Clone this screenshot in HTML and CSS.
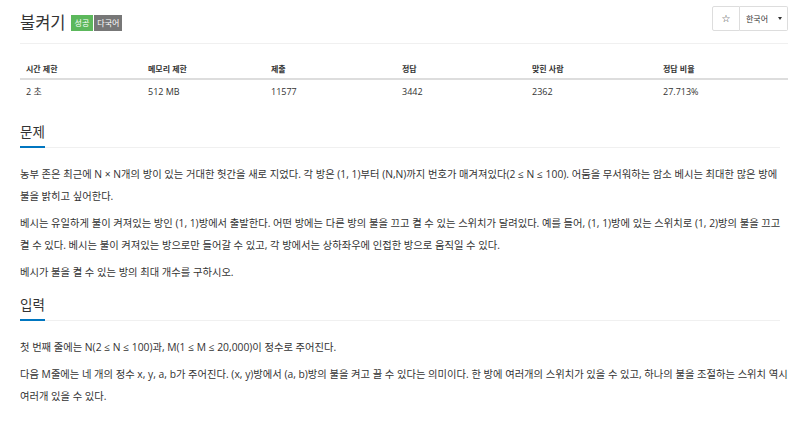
FILE: index.html
```html
<!DOCTYPE html>
<html lang="ko">
<head>
<meta charset="utf-8">
<link rel="stylesheet" href="styles.css">
</head>
<body>
<div class="page">
  <div class="page-header">
    <h1 class="title">불켜기<span class="badge badge-success">성공</span><span class="badge badge-gray">다국어</span></h1>
    <div class="btn-group">
      <button class="btn btn-star">☆</button>
      <button class="btn btn-lang">한국어<span class="caret"></span></button>
    </div>
  </div>

  <table class="info">
    <thead>
      <tr><th>시간 제한</th><th>메모리 제한</th><th>제출</th><th>정답</th><th>맞힌 사람</th><th>정답 비율</th></tr>
    </thead>
    <tbody>
      <tr><td>2 초</td><td>512 MB</td><td>11577</td><td>3442</td><td>2362</td><td>27.713%</td></tr>
    </tbody>
  </table>

  <section class="section">
    <div class="headline"><h2>문제</h2></div>
    <div class="text">
      <p>농부 존은 최근에 N × N개의 방이 있는 거대한 헛간을 새로 지었다. 각 방은 (1, 1)부터 (N,N)까지 번호가 매겨져있다(2 ≤ N ≤ 100). 어둠을 무서워하는 암소 베시는 최대한 많은 방에 불을 밝히고 싶어한다.</p>
      <p>베시는 유일하게 불이 켜져있는 방인 (1, 1)방에서 출발한다. 어떤 방에는 다른 방의 불을 끄고 켤 수 있는 스위치가 달려있다. 예를 들어, (1, 1)방에 있는 스위치로 (1, 2)방의 불을 끄고 켤 수 있다. 베시는 불이 켜져있는 방으로만 들어갈 수 있고, 각 방에서는 상하좌우에 인접한 방으로 움직일 수 있다.</p>
      <p>베시가 불을 켤 수 있는 방의 최대 개수를 구하시오.</p>
    </div>
  </section>

  <section class="section">
    <div class="headline"><h2>입력</h2></div>
    <div class="text">
      <p>첫 번째 줄에는 N(2 ≤ N ≤ 100)과, M(1 ≤ M ≤ 20,000)이 정수로 주어진다.</p>
      <p>다음 M줄에는 네 개의 정수 x, y, a, b가 주어진다. (x, y)방에서 (a, b)방의 불을 켜고 끌 수 있다는 의미이다. 한 방에 여러개의 스위치가 있을 수 있고, 하나의 불을 조절하는 스위치 역시 여러개 있을 수 있다.</p>
    </div>
  </section>
</div>
</body>
</html>
```

FILE: styles.css
```css
* { box-sizing: border-box; }
html, body { margin: 0; padding: 0; background: #fff; }
body {
  font-family: "Open Sans", "Noto Sans CJK KR", sans-serif;
  color: #333;
}
.page {
  display: flex;
  flex-direction: column;
  padding: 0 12px 0 20px;
}

.page-header {
  display: flex;
  justify-content: space-between;
  align-items: flex-start;
  border-bottom: 1px solid #f0f0f0;
  height: 44px;
}
.title {
  margin: 12px 0 0;
  font-size: 16.5px;
  font-weight: 400;
  line-height: 20px;
  display: flex;
  align-items: center;
  font-family: "Noto Sans CJK KR", sans-serif;
  color: #333;
}
.badge {
  display: inline-block;
  font-size: 8px;
  line-height: 16px;
  height: 16px;
  padding: 0 4px;
  color: #fff;
  font-weight: 400;
  margin-left: 1px;
  margin-top: 2px;
}
.badge-success { background: #5cb85c; margin-left: 5px; }
.badge-gray { background: #777; padding: 0 3px; }

.btn-group { display: flex; margin-top: 6px; }
.btn {
  font-family: "Noto Sans CJK KR", sans-serif;
  background: #fff;
  border: 1px solid #ddd;
  color: #333;
  height: 25px;
  font-size: 8px;
  margin: 0;
  display: flex;
  align-items: center;
}
.btn-star {
  width: 28px;
  padding: 0;
  justify-content: center;
  font-family: "DejaVu Sans", sans-serif;
  font-size: 10px;
  font-weight: 700;
  border-radius: 2px 0 0 2px;
}
.btn-lang {
  border-left: none;
  width: 48px;
  padding: 0 0 0 6px;
  border-radius: 0 2px 2px 0;
}
.caret {
  display: inline-block;
  width: 0; height: 0;
  border-left: 2.5px solid transparent;
  border-right: 2.5px solid transparent;
  border-top: 3px solid #333;
  margin-left: 10px;
}

.info {
  width: 768px;
  border-collapse: separate;
  border-spacing: 0;
  margin-top: 14px;
  table-layout: fixed;
}
.info th, .info td {
  text-align: left;
  padding: 0 6px;
  vertical-align: middle;
}
.info th {
  font-weight: 700;
  font-size: 8px;
  height: 22px;
  border-bottom: 2px solid #ddd;
}
.info td { height: 23px; font-size: 9px; }
.info th:nth-child(1) { width: 122px; }
.info th:nth-child(2) { width: 123px; }
.info th:nth-child(3) { width: 131px; }
.info th:nth-child(4) { width: 130px; }
.info th:nth-child(5) { width: 131px; }
.info th:nth-child(6) { width: 131px; }

.section { display: flex; flex-direction: column; margin-top: 18px; }
.section + .section { margin-top: 11px; }
.headline {
  border-bottom: 1px solid #f0f0f0;
  margin-right: 8px;
  display: flex;
}
.headline h2 {
  margin: 0 0 -1px;
  font-size: 13.5px;
  font-weight: 400;
  line-height: 20px;
  padding-bottom: 5px;
  border-bottom: 2px solid #0076c0;
  font-family: "Noto Sans CJK KR", sans-serif;
  color: #333;
}
.text { padding-top: 15px; }
.text p {
  margin: 0 0 5px;
  font-size: 10.3px;
  line-height: 22px;
}
.text p:last-child { margin-bottom: 0; }
```
